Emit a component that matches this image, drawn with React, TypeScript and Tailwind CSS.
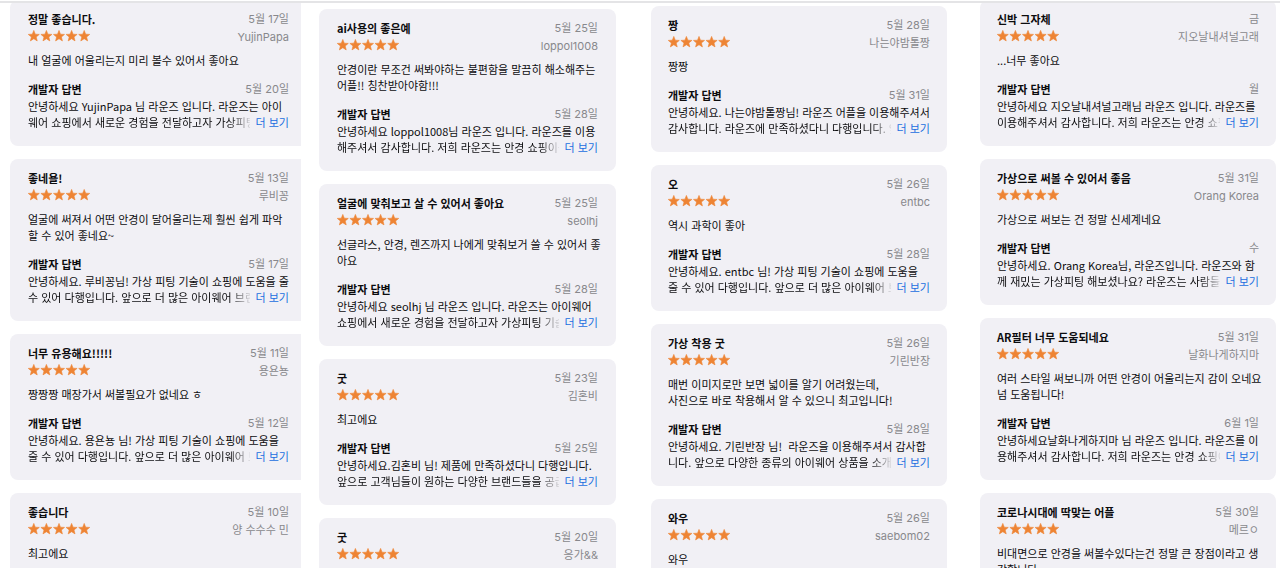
import clsx from "clsx";

interface Reply {
  date: string;
  firstLine: string;
  lastLine: string;
}

interface Review {
  title: string;
  date: string;
  author: string;
  body?: string;
  reply?: Reply;
}

interface ReviewColumn {
  id: string;
  className: string;
  cardClassName: string;
  reviews: Review[];
}

const columns: ReviewColumn[] = [
  {
    id: "first",
    className: "flex-[291] ml-[10px]",
    cardClassName: "rounded-l-lg pl-[18px] pr-3",
    reviews: [
      {
        title: "정말 좋습니다.",
        date: "5월 17일",
        author: "YujinPapa",
        body: "내 얼굴에 어울리는지 미리 볼수 있어서 좋아요",
        reply: {
          date: "5월 20일",
          firstLine: "안녕하세요 YujinPapa 님 라운즈 입니다. 라운즈는 아이",
          lastLine: "웨어 쇼핑에서 새로운 경험을 전달하고자 가상피팅",
        },
      },
      {
        title: "좋네욜!",
        date: "5월 13일",
        author: "루비꽁",
        body: "얼굴에 써져서 어떤 안경이 달어울리는제 훨씬 쉽게 파악\n할 수 있어 좋네요~",
        reply: {
          date: "5월 17일",
          firstLine: "안녕하세요. 루비꽁님! 가상 피팅 기술이 쇼핑에 도움을 줄",
          lastLine: "수 있어 다행입니다. 앞으로 더 많은 아이웨어 브랜",
        },
      },
      {
        title: "너무 유용해요!!!!!",
        date: "5월 11일",
        author: "용욘뇽",
        body: "짱짱짱 매장가서 써볼필요가 없네요 ㅎ",
        reply: {
          date: "5월 12일",
          firstLine: "안녕하세요. 용욘뇽 님! 가상 피팅 기술이 쇼핑에 도움을",
          lastLine: "줄 수 있어 다행입니다. 앞으로 더 많은 아이웨어 브",
        },
      },
      {
        title: "좋습니다",
        date: "5월 10일",
        author: "양 수수수 민",
        body: "최고에요",
      },
    ],
  },
  {
    id: "second",
    className: "flex-[297] ml-[18px] pt-[9px]",
    cardClassName: "rounded-lg px-[18px]",
    reviews: [
      {
        title: "ai사용의 좋은예",
        date: "5월 25일",
        author: "loppol1008",
        body: "안경이란 무조건 써봐야하는 불편함을 말끔히 해소해주는\n어플!! 칭찬받아야함!!!",
        reply: {
          date: "5월 28일",
          firstLine: "안녕하세요 loppol1008님 라운즈 입니다. 라운즈를 이용",
          lastLine: "해주셔서 감사합니다. 저희 라운즈는 안경 쇼핑이용",
        },
      },
      {
        title: "얼굴에 맞춰보고 살 수 있어서 좋아요",
        date: "5월 25일",
        author: "seolhj",
        body: "선글라스, 안경, 렌즈까지 나에게 맞춰보거 쓸 수 있어서 좋\n아요",
        reply: {
          date: "5월 28일",
          firstLine: "안녕하세요 seolhj 님 라운즈 입니다. 라운즈는 아이웨어",
          lastLine: "쇼핑에서 새로운 경험을 전달하고자 가상피팅 기술",
        },
      },
      {
        title: "굿",
        date: "5월 23일",
        author: "김혼비",
        body: "최고에요",
        reply: {
          date: "5월 25일",
          firstLine: "안녕하세요.김혼비 님! 제품에 만족하셨다니 다행입니다.",
          lastLine: "앞으로 고객님들이 원하는 다양한 브랜드들을 공급",
        },
      },
      { title: "굿", date: "5월 20일", author: "응가&&" },
    ],
  },
  {
    id: "third",
    className: "flex-[296] ml-[35px] pt-[6px]",
    cardClassName: "rounded-lg px-[17px]",
    reviews: [
      {
        title: "짱",
        date: "5월 28일",
        author: "나는야밤톨짱",
        body: "짱짱",
        reply: {
          date: "5월 31일",
          firstLine: "안녕하세요. 나는야밤톨짱님! 라운즈 어플을 이용해주셔서",
          lastLine: "감사합니다. 라운즈에 만족하셨다니 다행입니다. 앞",
        },
      },
      {
        title: "오",
        date: "5월 26일",
        author: "entbc",
        body: "역시 과학이 좋아",
        reply: {
          date: "5월 28일",
          firstLine: "안녕하세요. entbc 님! 가상 피팅 기술이 쇼핑에 도움을",
          lastLine: "줄 수 있어 다행입니다. 앞으로 더 많은 아이웨어 브",
        },
      },
      {
        title: "가상 착용 굿",
        date: "5월 26일",
        author: "기린반장",
        body: "매번 이미지로만 보면 넓이를 알기 어려웠는데,\n사진으로 바로 착용해서 알 수 있으니 최고입니다!",
        reply: {
          date: "5월 28일",
          firstLine: "안녕하세요. 기린반장 님!  라운즈을 이용해주셔서 감사합",
          lastLine: "니다. 앞으로 다양한 종류의 아이웨어 상품을 소개",
        },
      },
      { title: "와우", date: "5월 26일", author: "saebom02", body: "와우" },
    ],
  },
  {
    id: "fourth",
    className: "flex-[296] ml-[33px] mr-1",
    cardClassName: "rounded-lg px-[17px]",
    reviews: [
      {
        title: "신박 그자체",
        date: "금",
        author: "지오날내셔널고래",
        body: "...너무 좋아요",
        reply: {
          date: "월",
          firstLine: "안녕하세요 지오날내셔널고래님 라운즈 입니다. 라운즈를",
          lastLine: "이용해주셔서 감사합니다. 저희 라운즈는 안경 쇼핑",
        },
      },
      {
        title: "가상으로 써볼 수 있어서 좋음",
        date: "5월 31일",
        author: "Orang Korea",
        body: "가상으로 써보는 건 정말 신세계네요",
        reply: {
          date: "수",
          firstLine: "안녕하세요. Orang Korea님, 라운즈입니다. 라운즈와 함",
          lastLine: "께 재밌는 가상피팅 해보셨나요? 라운즈는 사람들",
        },
      },
      {
        title: "AR필터 너무 도움되네요",
        date: "5월 31일",
        author: "날화나게하지마",
        body: "여러 스타일 써보니까 어떤 안경이 어울리는지 감이 오네요\n넘 도움됩니다!",
        reply: {
          date: "6월 1일",
          firstLine: "안녕하세요날화나게하지마 님 라운즈 입니다. 라운즈를 이",
          lastLine: "용해주셔서 감사합니다. 저희 라운즈는 안경 쇼핑이",
        },
      },
      {
        title: "코로나시대에 딱맞는 어플",
        date: "5월 30일",
        author: "메르ㅇ",
        body: "비대면으로 안경을 써볼수있다는건 정말 큰 장점이라고 생\n각합니다.",
      },
    ],
  },
];

function Stars() {
  return (
    <svg
      width="62"
      height="12"
      viewBox="0 0 310 60"
      role="img"
      aria-label="별점 5점"
      className="fill-[#ee8434] stroke-[#ee8434] stroke-[3]"
      strokeLinejoin="round"
    >
      {[0, 1, 2, 3, 4].map((i) => (
        <path
          key={i}
          transform={`translate(${i * 63} 0)`}
          d="M29 2 L36.4 20.8 L56.6 22 L41 34.9 L46.1 54.5 L29 43.6 L11.9 54.5 L17 34.9 L1.4 22 L21.6 20.8 Z"
        />
      ))}
    </svg>
  );
}

function DeveloperReply({ reply }: { reply: Reply }) {
  return (
    <section className="mt-[13px]">
      <div className="flex justify-between">
        <h4 className="font-bold">개발자 답변</h4>
        <time className="font-['Inter','Noto_Sans_CJK_KR',sans-serif] text-[#88888c]">{reply.date}</time>
      </div>
      <p className="mt-px whitespace-pre">{reply.firstLine}</p>
      <div className="flex justify-between gap-[6px]">
        {/* the last line fades out before the "more" button */}
        <p className="min-w-0 flex-1 overflow-hidden whitespace-pre mask-[linear-gradient(to_left,rgba(0,0,0,0.1),black_20px)]">
          {reply.lastLine}
        </p>
        <button type="button" className="shrink-0 text-[#1a6fe0]">
          더 보기
        </button>
      </div>
    </section>
  );
}

function ReviewCard({ review, className }: { review: Review; className: string }) {
  return (
    <article className={clsx("bg-[#f1f0f5] pt-[11px] pb-4", className)}>
      <header className="flex justify-between">
        <div>
          <h3 className="font-bold">{review.title}</h3>
          <div className="mt-[3px] flex">
            <Stars />
          </div>
        </div>
        <div className="text-right font-['Inter','Noto_Sans_CJK_KR',sans-serif] text-[#88888c]">
          <time className="block">{review.date}</time>
          <p className="mt-[2px]">{review.author}</p>
        </div>
      </header>
      <p className="mt-[7px] min-h-4 whitespace-pre">{review.body}</p>
      {review.reply && <DeveloperReply reply={review.reply} />}
    </article>
  );
}

export default function App() {
  return (
    <main
      lang="ko"
      className="relative flex h-screen items-start overflow-hidden bg-white font-['Noto_Sans_CJK_KR',sans-serif] text-[11px] leading-4 text-[#0c0c0e]"
    >
      <div className="absolute inset-x-0 top-0 h-[3px] border-b-2 border-[#e4e4e6] bg-white" />
      {columns.map((column) => (
        <div key={column.id} className={clsx("flex min-w-0 flex-col gap-[13px]", column.className)}>
          {column.reviews.map((review, i) => (
            <ReviewCard key={i} review={review} className={column.cardClassName} />
          ))}
        </div>
      ))}
    </main>
  );
}
